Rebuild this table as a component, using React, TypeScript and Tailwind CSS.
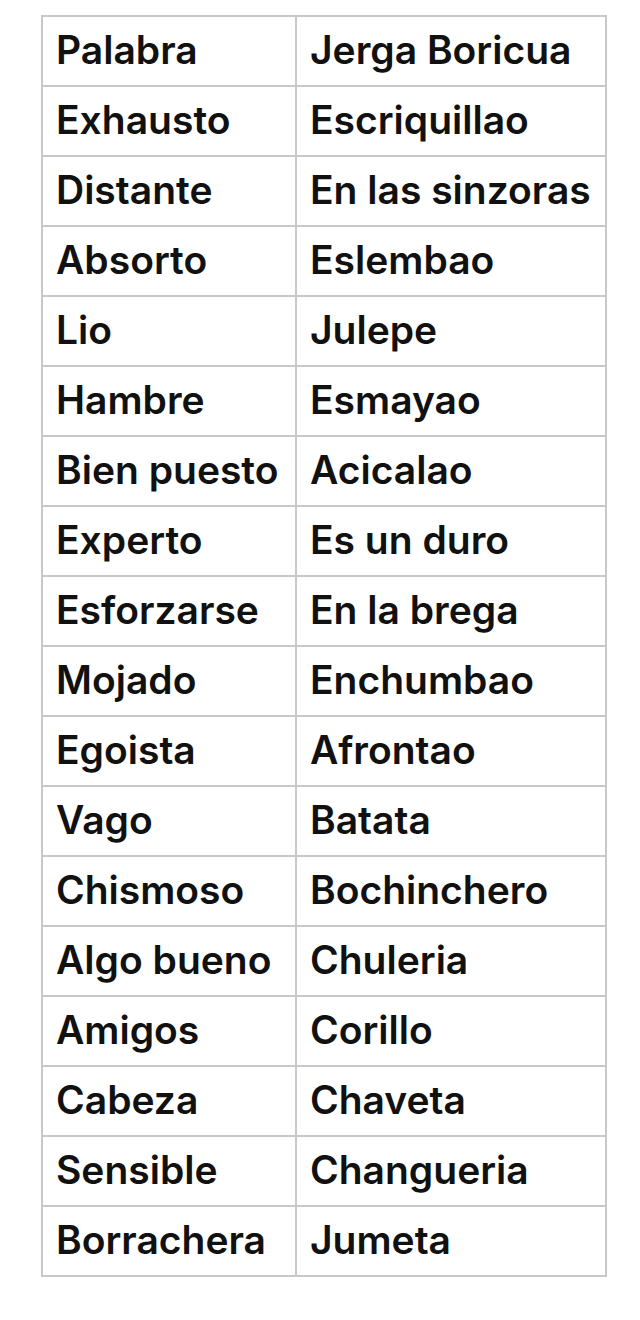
import React from "react";

const rows: [string, string][] = [
  ["Palabra", "Jerga Boricua"],
  ["Exhausto", "Escriquillao"],
  ["Distante", "En las sinzoras"],
  ["Absorto", "Eslembao"],
  ["Lio", "Julepe"],
  ["Hambre", "Esmayao"],
  ["Bien puesto", "Acicalao"],
  ["Experto", "Es un duro"],
  ["Esforzarse", "En la brega"],
  ["Mojado", "Enchumbao"],
  ["Egoista", "Afrontao"],
  ["Vago", "Batata"],
  ["Chismoso", "Bochinchero"],
  ["Algo bueno", "Chuleria"],
  ["Amigos", "Corillo"],
  ["Cabeza", "Chaveta"],
  ["Sensible", "Changueria"],
  ["Borrachera", "Jumeta"],
];

export default function App() {
  return (
    <div className="w-[640px] h-[1320px] bg-white pt-[15px] pl-[41px] font-['Inter',sans-serif] text-[#111]">
      <div className="grid w-[566px] grid-cols-[252px_308px] gap-[2px] bg-[#c8c8c8] p-[2px]">
        {rows.map(([a, b]) => (
          <React.Fragment key={a}>
            <div className="flex h-[68px] items-center bg-white pl-[13px] pb-[4px] text-[39px] font-semibold leading-none tracking-normal whitespace-nowrap">
              {a}
            </div>
            <div className="flex h-[68px] items-center bg-white pl-[13px] pb-[4px] text-[39px] font-semibold leading-none tracking-normal whitespace-nowrap">
              {b}
            </div>
          </React.Fragment>
        ))}
      </div>
    </div>
  );
}
